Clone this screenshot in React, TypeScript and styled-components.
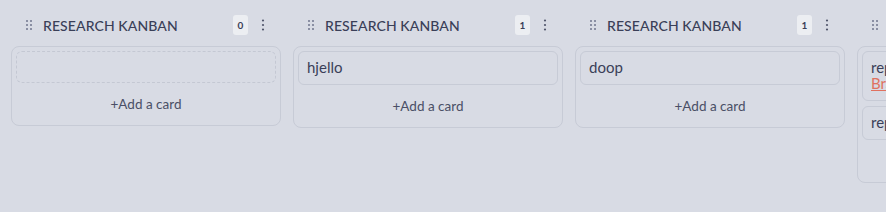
import styled, { createGlobalStyle } from "styled-components";

const GlobalStyle = createGlobalStyle`
  html, body {
    margin: 0;
    padding: 0;
    background: #d8dbe4;
    font-family: Lato, "Open Sans", sans-serif;
    overflow: hidden;
  }
`;

const Board = styled.div`
  display: flex;
  gap: 12px;
  padding: 14px 0 0 11px;
  height: 212px;
  box-sizing: border-box;
  width: 886px;
  overflow: hidden;
`;

const Column = styled.div`
  display: flex;
  flex-direction: column;
  flex: 0 0 270px;
  width: 270px;
`;

const Header = styled.div`
  display: flex;
  align-items: center;
  height: 22px;
  padding: 0 16px 0 14px;
  margin-bottom: 10px;
`;

const Title = styled.div`
  flex: 1;
  font-size: 14px;
  font-weight: 500;
  color: #3a3f58;
  letter-spacing: 0.1px;
  margin-left: 10px;
`;

const Badge = styled.div`
  display: flex;
  align-items: center;
  justify-content: center;
  min-width: 15px;
  height: 20px;
  border-radius: 3px;
  background: #eceef2;
  font-size: 10px;
  font-weight: 700;
  color: #3a3f58;
`;

const Kebab = styled.div`
  display: flex;
  align-items: center;
  justify-content: center;
  width: 4px;
  margin-left: 13px;
`;

const Body = styled.div`
  display: flex;
  flex-direction: column;
  gap: 5px;
  padding: 4px 4px 0 4px;
  border: 1px solid #c7cbd6;
  border-radius: 8px;
`;

const Placeholder = styled.div`
  height: 30px;
  border: 1px dashed #c4c8d3;
  border-radius: 6px;
`;

const Card = styled.div`
  padding: 7px 8px 9px;
  border: 1px solid #c7cbd6;
  border-radius: 6px;
  font-size: 15px;
  line-height: 16px;
  color: #3a3f58;
  white-space: nowrap;
  overflow: hidden;
`;

const Link = styled.a`
  color: #e0715f;
  text-decoration: underline;
`;

const AddCard = styled.div`
  display: flex;
  align-items: center;
  justify-content: center;
  height: 32px;
  margin-bottom: 5px;
  font-size: 13.5px;
  color: #4a4f66;
`;

const DragIcon = () => (
  <svg width="8" height="12" viewBox="0 0 8 12">
    {[0, 1, 2].map((r) =>
      [0, 1].map((c) => (
        <rect key={`${r}-${c}`} x={c * 4 + 1} y={r * 4 + 1} width="2" height="2" fill="#8a8fa3" />
      ))
    )}
  </svg>
);

const DotsIcon = () => (
  <svg width="4" height="14" viewBox="0 0 4 14">
    <circle cx="2" cy="2.5" r="1.1" fill="#50556b" />
    <circle cx="2" cy="7" r="1.1" fill="#50556b" />
    <circle cx="2" cy="11.5" r="1.1" fill="#50556b" />
  </svg>
);

const ColumnHeader = ({ count }: { count: number }) => (
  <Header>
    <DragIcon />
    <Title>RESEARCH KANBAN</Title>
    <Badge>{count}</Badge>
    <Kebab>
      <DotsIcon />
    </Kebab>
  </Header>
);

export default function App() {
  return (
    <>
      <GlobalStyle />
      <Board>
        <Column>
          <ColumnHeader count={0} />
          <Body>
            <Placeholder />
            <AddCard>+Add a card</AddCard>
          </Body>
        </Column>
        <Column>
          <ColumnHeader count={1} />
          <Body>
            <Card>hjello</Card>
            <AddCard>+Add a card</AddCard>
          </Body>
        </Column>
        <Column>
          <ColumnHeader count={1} />
          <Body>
            <Card>doop</Card>
            <AddCard>+Add a card</AddCard>
          </Body>
        </Column>
        <Column>
          <ColumnHeader count={2} />
          <Body>
            <Card>
              replace this
              <br />
              <Link>Brainstorm</Link>
            </Card>
            <Card>replace</Card>
            <AddCard>+Add a card</AddCard>
          </Body>
        </Column>
      </Board>
    </>
  );
}
